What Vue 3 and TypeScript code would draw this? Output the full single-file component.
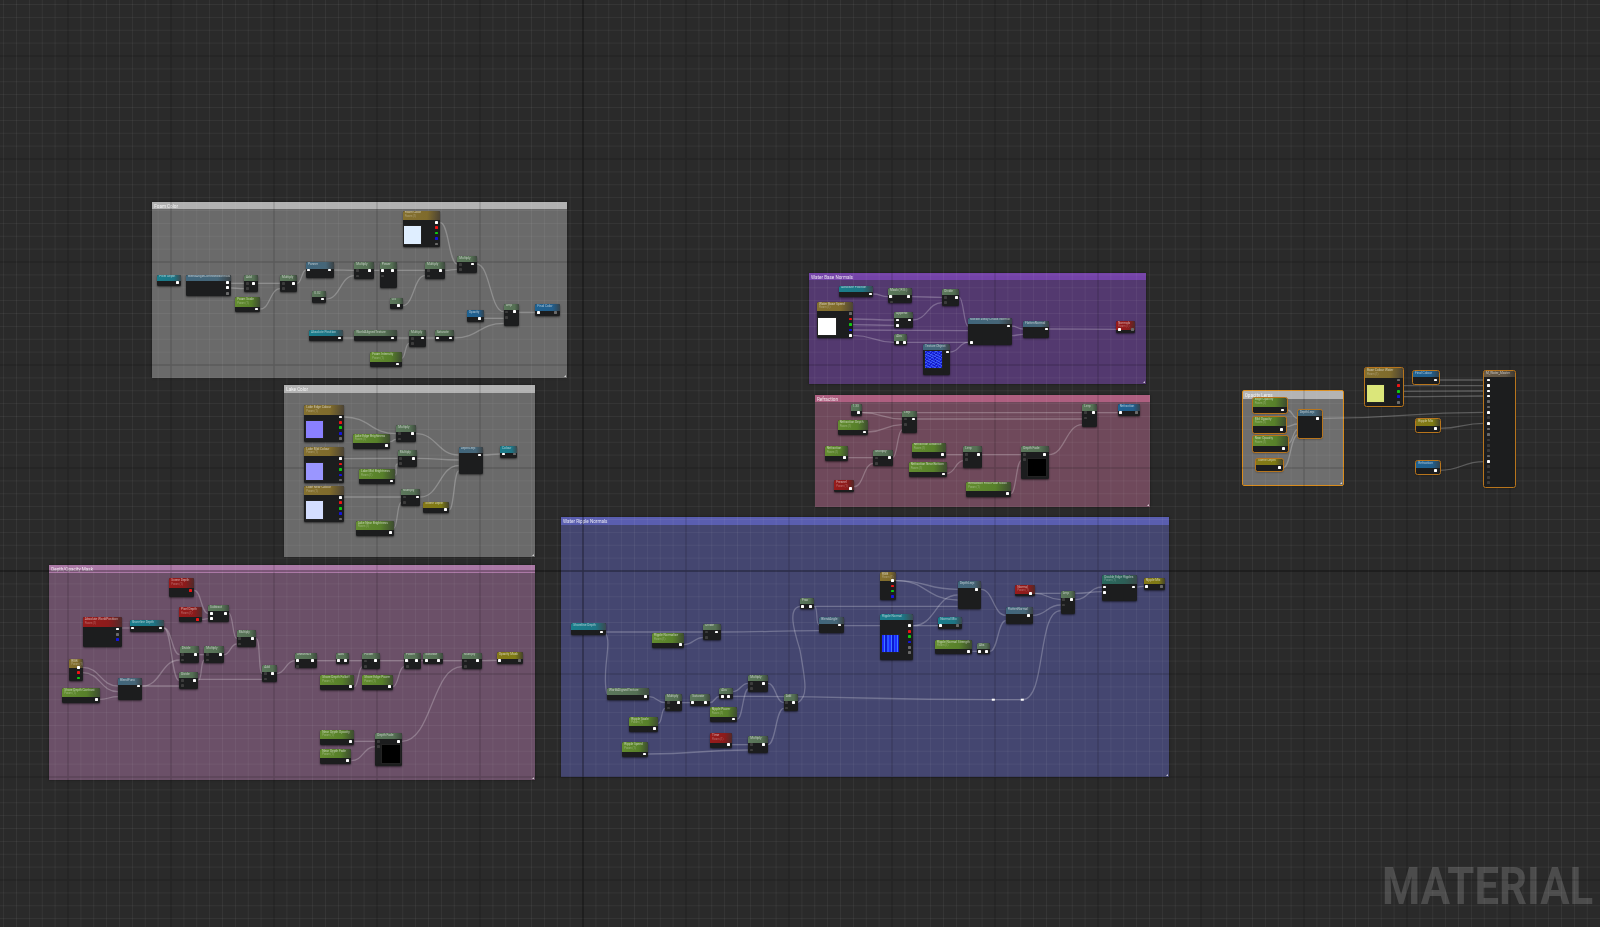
<script setup lang="ts">
import { computed } from 'vue'

type Pin = [number, number, string?]
type Thumb = [number, number, number, number, string]

interface GraphNode {
  x1: number
  y1: number
  x2: number
  y2: number
  kind: string
  title: string
  pins: Pin[]
  thumb?: Thumb
}

interface Group {
  ox: number
  oy: number
  selected?: boolean
  nodes: GraphNode[]
  wires: number[][]
}

const W = 1600
const H = 927
const ORIGIN_X = 583
const ORIGIN_Y = 571
const STEP = 12.875

const n = (x1: number, y1: number, x2: number, y2: number, kind: string, title: string, pins: Pin[] = [], thumb?: Thumb): GraphNode => ({ x1, y1, x2, y2, kind, title, pins, thumb })

// node and wire coordinates are in a 3x space per group, see ox / oy
const groups: Group[] = [
  {
    ox: 140, oy: 190,
    nodes: [
      n(52, 254, 123, 288, 'teal', 'Pixel Depth', [[113, 278]]),
      n(138, 254, 273, 319, 'slate', 'BlendAngleCorrectedNormals', [[262, 278], [262, 293], [262, 310, 'd']]),
      n(312, 255, 354, 306, 'math', 'Add', [[341, 280]]),
      n(286, 322, 361, 367, 'param', 'Foam Scale', [[350, 357]]),
      n(420, 255, 472, 306, 'math', 'Multiply', [[460, 280]]),
      n(498, 217, 581, 265, 'slate', 'Panner', [[506, 240], [568, 240]]),
      n(643, 217, 701, 267, 'math', 'Multiply', [[689, 241]]),
      n(517, 303, 559, 338, 'math', '0.02', [[547, 327]]),
      n(719, 217, 771, 295, 'math', 'Power', [[727, 241], [759, 241]]),
      n(749, 323, 788, 357, 'math', '0.5', [[776, 347]]),
      n(855, 217, 914, 267, 'math', 'Multiply', [[902, 241]]),
      n(952, 198, 1010, 248, 'math', 'Multiply', [[998, 222]]),
      n(788, 62, 901, 171, 'tex', 'Foam Color', [[890, 98], [890, 113, 'r'], [890, 129, 'g'], [890, 146, 'b'], [890, 162, 'd']], [789, 106, 847, 164, 'foam']),
      n(980, 361, 1032, 395, 'blue', 'Opacity', [[1020, 385]]),
      n(1091, 341, 1136, 408, 'math', 'Lerp', [[1125, 365]]),
      n(1186, 343, 1259, 379, 'blue', 'Final Color', [[1196, 367], [1248, 367, 'd']]),
      n(507, 420, 609, 454, 'teal', 'Absolute Position', [[597, 444]]),
      n(643, 420, 771, 454, 'math', 'WorldAlignedTexture', [[759, 444]]),
      n(807, 420, 858, 470, 'math', 'Multiply', [[846, 444]]),
      n(884, 420, 943, 454, 'math', 'Saturate', [[894, 444], [931, 444]]),
      n(691, 487, 785, 531, 'param', 'Foam Intensity', [[774, 522]]),
    ],
    wires: [
      [273, 280, 312, 280], [273, 294, 312, 296], [361, 357, 420, 296], [354, 280, 420, 280], [472, 280, 498, 240],
      [581, 240, 643, 241], [559, 327, 643, 257], [701, 241, 719, 241], [771, 241, 855, 241], [788, 347, 855, 257],
      [914, 241, 952, 238], [901, 98, 952, 222], [1010, 222, 1091, 365], [1032, 385, 1091, 385], [943, 444, 1091, 400],
      [609, 444, 643, 444], [771, 444, 807, 444], [858, 444, 884, 444], [785, 505, 807, 460], [1136, 367, 1186, 367],
    ],
  },
  {
    ox: 280, oy: 380,
    nodes: [
      n(73, 76, 192, 185, 'tex', 'Lake Edge Colour', [[182, 111], [182, 127, 'r'], [182, 143, 'g'], [182, 160, 'b'], [182, 176, 'd']], [75, 120, 133, 178, 'edge']),
      n(73, 201, 192, 310, 'tex', 'Lake Mid Colour', [[182, 236], [182, 252, 'r'], [182, 268, 'g'], [182, 285, 'b'], [182, 300, 'd']], [75, 246, 133, 304, 'mid']),
      n(73, 317, 192, 426, 'tex', 'Lake Near Colour', [[182, 352], [182, 368, 'r'], [182, 385, 'g'], [182, 401, 'b'], [182, 417, 'd']], [75, 361, 133, 419, 'near']),
      n(218, 162, 330, 207, 'param', 'Lake Edge Brightness', [[320, 197]]),
      n(237, 268, 344, 313, 'param', 'Lake Mid Brightness', [[334, 303]]),
      n(227, 423, 341, 468, 'param', 'Lake Near Brightness', [[331, 458]]),
      n(349, 136, 407, 187, 'math', 'Multiply', [[397, 161]]),
      n(353, 210, 412, 261, 'math', 'Multiply', [[402, 235]]),
      n(363, 326, 421, 377, 'math', 'Multiply', [[411, 351]]),
      n(430, 365, 508, 400, 'olive', 'Scene Depth', [[498, 389]]),
      n(536, 200, 609, 283, 'slate', 'DepthLerp', [[600, 225]]),
      n(660, 199, 711, 234, 'teal', 'Colour', [[670, 222], [702, 222, 'd']]),
    ],
    wires: [
      [192, 111, 349, 161], [330, 185, 349, 178], [192, 236, 353, 235], [344, 285, 353, 252], [192, 351, 363, 351],
      [341, 445, 363, 368], [407, 161, 536, 225], [412, 235, 536, 240], [421, 351, 536, 257], [508, 389, 536, 273], [609, 225, 660, 222],
    ],
  },
  {
    ox: 40, oy: 560,
    nodes: [
      n(388, 55, 463, 111, 'red', 'Scene Depth', [[451, 91, 'r']]),
      n(417, 142, 485, 186, 'red', 'Pixel Depth', [[473, 178, 'r']]),
      n(504, 135, 567, 186, 'math', 'Subtract', [[514, 160], [555, 160], [514, 176]]),
      n(128, 172, 245, 261, 'red', 'Absolute WorldPosition', [[234, 207], [234, 223, 'd'], [234, 239, 'b']]),
      n(269, 180, 372, 215, 'teal', 'Shoreline Depth', [[279, 204], [362, 204]]),
      n(419, 259, 478, 310, 'math', 'Divide', [[466, 284]]),
      n(493, 259, 552, 309, 'math', 'Multiply', [[541, 284]]),
      n(590, 211, 649, 261, 'math', 'Multiply', [[637, 236]]),
      n(417, 336, 475, 387, 'math', 'Divide', [[464, 361]]),
      n(88, 297, 128, 364, 'tex', 'RGB', [[116, 322], [116, 338, 'r'], [116, 354, 'g']]),
      n(67, 384, 179, 428, 'param', 'Shore Depth Contrast', [[169, 418]]),
      n(234, 355, 307, 420, 'slate', 'BlendFunc', [[295, 378]]),
      n(667, 316, 710, 367, 'math', 'Add', [[698, 341]]),
      n(764, 278, 830, 323, 'math', 'OneMinus', [[772, 302], [818, 302]]),
      n(889, 278, 928, 312, 'math', 'Abs', [[897, 302], [917, 302]]),
      n(967, 278, 1019, 328, 'math', 'Power', [[1007, 302]]),
      n(841, 346, 943, 390, 'param', 'Shore Depth Falloff', [[932, 380]]),
      n(967, 346, 1059, 390, 'param', 'Shore Edge Power', [[1048, 380]]),
      n(1092, 278, 1142, 328, 'math', 'Power', [[1100, 302], [1130, 302]]),
      n(1150, 278, 1208, 312, 'math', 'Saturate', [[1160, 302], [1197, 302]]),
      n(1266, 278, 1325, 328, 'math', 'Multiply', [[1313, 302]]),
      n(1370, 277, 1448, 312, 'olive', 'Opacity Mask', [[1380, 301], [1438, 301, 'd']]),
      n(841, 510, 943, 554, 'param', 'Near Depth Opacity', [[932, 544]]),
      n(841, 567, 934, 612, 'param', 'Near Depth Fade', [[922, 602]]),
      n(1006, 519, 1086, 618, 'math', 'Depth Fade', [[1075, 544]], [1023, 552, 1084, 612, 'black']),
    ],
    wires: [
      [463, 91, 504, 160], [485, 178, 504, 176], [567, 160, 590, 236], [245, 204, 269, 204], [372, 204, 419, 284],
      [372, 204, 417, 361], [478, 284, 493, 284], [552, 284, 590, 252], [475, 361, 493, 300], [128, 322, 234, 378],
      [128, 338, 234, 395], [179, 418, 234, 410], [307, 378, 419, 300], [307, 378, 417, 378], [475, 358, 667, 358],
      [649, 236, 667, 341], [710, 341, 764, 302], [830, 302, 889, 302], [928, 302, 967, 302], [943, 380, 967, 320],
      [1019, 302, 1092, 302], [1059, 380, 1092, 320], [1142, 302, 1150, 302], [1208, 302, 1266, 302], [1325, 302, 1370, 301],
      [1086, 544, 1266, 320], [943, 544, 1006, 544], [934, 602, 1006, 560],
    ],
  },
  {
    ox: 555, oy: 510,
    nodes: [
      n(49, 340, 152, 375, 'teal', 'Shoreline Depth', [[140, 366]]),
      n(291, 370, 387, 413, 'param', 'Ripple Normalize', [[377, 404]]),
      n(445, 341, 497, 391, 'math', 'Divide', [[485, 366]]),
      n(793, 322, 866, 370, 'slate', 'BlendAngle', [[854, 345]]),
      n(735, 264, 778, 298, 'math', 'Frac', [[743, 289], [767, 289]]),
      n(156, 535, 283, 569, 'math', 'WorldAlignedTexture', [[272, 560]]),
      n(330, 553, 381, 603, 'math', 'Multiply', [[369, 578]]),
      n(406, 553, 465, 587, 'math', 'Saturate', [[414, 578], [453, 578]]),
      n(493, 534, 533, 568, 'math', 'Abs', [[502, 559], [521, 559]]),
      n(580, 495, 639, 545, 'math', 'Multiply', [[627, 520]]),
      n(686, 553, 728, 603, 'math', 'Add', [[716, 578]]),
      n(223, 621, 310, 665, 'param', 'Ripple Scale', [[299, 656]]),
      n(464, 592, 547, 636, 'param', 'Ripple Power', [[536, 627]]),
      n(465, 670, 530, 713, 'red', 'Time', [[519, 704]]),
      n(202, 697, 279, 741, 'param', 'Ripple Speed', [[269, 732]]),
      n(580, 679, 639, 729, 'math', 'Multiply', [[627, 704]]),
    ],
    wires: [
      [152, 366, 445, 366], [497, 366, 793, 362], [387, 404, 445, 382], [152, 370, 172, 400, 138, 490, 156, 552],
      [283, 560, 330, 578], [310, 640, 330, 595], [381, 578, 406, 578], [465, 578, 493, 559], [533, 545, 580, 520],
      [547, 627, 580, 537], [639, 520, 686, 578], [530, 704, 580, 704], [279, 732, 580, 720], [639, 704, 686, 595],
      [728, 578, 762, 560, 750, 510, 735, 420], [735, 420, 720, 370, 695, 295, 735, 289], [778, 289, 793, 345],
    ],
  },
  {
    ox: 860, oy: 510,
    nodes: [
      n(60, 186, 108, 269, 'tex', 'RGB', [[96, 212], [96, 228, 'r'], [96, 243, 'g'], [96, 260, 'b']]),
      n(60, 312, 160, 449, 'teal', 'Ripple Normal', [[149, 347], [149, 364, 'r'], [149, 380, 'g'], [149, 396, 'b'], [149, 412, 'd'], [149, 428, 'd']], [63, 372, 120, 430, 'stripes']),
      n(293, 214, 363, 296, 'slate', 'DepthLerp', [[351, 238]]),
      n(235, 322, 305, 356, 'teal', 'Normal Mix', [[243, 347], [294, 347, 'd']]),
      n(225, 390, 337, 433, 'param', 'Ripple Normal Strength', [[325, 424]]),
      n(351, 399, 390, 433, 'math', 'Abs', [[359, 424], [379, 424]]),
      n(437, 292, 518, 341, 'slate', 'FlattenNormal', [[506, 316]]),
      n(466, 225, 525, 259, 'red', 'Normal', [[513, 250]]),
      n(602, 244, 646, 312, 'math', 'Lerp', [[634, 269]]),
      n(727, 195, 832, 273, 'green', 'Double Edge Ripples', [[735, 231], [735, 247], [820, 231]]),
      n(851, 204, 916, 239, 'olive', 'Ripple Mix', [[860, 229], [906, 229, 'd']]),
    ],
    wires: [
      [-382, 559, 400, 569], [400, 569, 487, 569], [487, 569, 560, 569, 530, 302, 602, 302],
      [-137, 289, 293, 289], [-49, 347, 60, 347], [108, 212, 293, 238], [108, 212, 293, 270],
      [160, 347, 235, 347], [160, 347, 293, 255], [363, 238, 437, 316], [337, 424, 351, 424], [390, 424, 437, 332],
      [525, 250, 602, 269], [525, 250, 602, 250], [518, 316, 602, 285], [646, 269, 727, 231], [646, 250, 727, 245], [832, 231, 851, 229],
    ],
  },
  {
    ox: 800, oy: 265,
    nodes: [
      n(118, 62, 220, 96, 'teal', 'Absolute Position', [[211, 87]]),
      n(264, 70, 335, 115, 'math', 'Mask ( R G )', [[272, 95], [326, 95]]),
      n(427, 72, 478, 122, 'math', 'Divide', [[469, 97]]),
      n(51, 111, 159, 219, 'tex', 'Water Base Speed', [[150, 145, 'd'], [150, 162, 'r'], [150, 179, 'g'], [150, 195, 'b'], [150, 211]], [52, 156, 110, 214, 'white']),
      n(283, 140, 338, 190, 'math', 'Append', [[292, 165], [329, 165], [292, 181]]),
      n(283, 208, 320, 240, 'math', 'Abs', [[292, 232], [313, 232]]),
      n(369, 237, 451, 329, 'slate', 'Texture Object', [[442, 261]], [371, 255, 430, 313, 'noise']),
      n(504, 158, 635, 241, 'slate', 'Motion 4Way Chaos Normal', [[625, 183], [514, 232]]),
      n(669, 168, 747, 218, 'slate', 'FlattenNormal', [[738, 192]]),
      n(948, 168, 1006, 203, 'red', 'Normals', [[958, 193], [998, 193, 'd']]),
    ],
    wires: [
      [220, 87, 264, 95], [335, 95, 427, 97], [159, 162, 283, 165], [159, 179, 283, 181], [159, 195, 504, 197],
      [159, 211, 283, 232], [320, 232, 504, 232], [338, 165, 427, 113], [478, 97, 504, 183], [451, 261, 504, 232],
      [635, 183, 669, 192], [635, 212, 669, 208], [747, 192, 948, 193],
    ],
  },
  {
    ox: 805, oy: 390,
    nodes: [
      n(137, 43, 172, 78, 'math', '1.33', [[162, 68]]),
      n(98, 91, 188, 136, 'param', 'Refraction Depth', [[178, 126]]),
      n(59, 169, 130, 213, 'param', 'Refraction', [[120, 203]]),
      n(88, 271, 147, 305, 'red', 'Fresnel', [[137, 296]]),
      n(205, 179, 263, 228, 'math', 'Multiply', [[254, 202]]),
      n(291, 62, 335, 129, 'math', 'Lerp', [[326, 87]]),
      n(320, 158, 424, 203, 'param', 'Refraction Distance', [[414, 194]]),
      n(311, 217, 427, 262, 'param', 'Refraction Near Bottom', [[417, 252]]),
      n(475, 168, 531, 235, 'math', 'Lerp', [[521, 193]]),
      n(484, 275, 618, 320, 'param', 'Refraction Final Fade Mask', [[608, 310]]),
      n(649, 168, 731, 266, 'math', 'Depth Fade', [[720, 193]], [667, 204, 725, 262, 'black']),
      n(832, 43, 877, 110, 'math', 'Lerp', [[867, 68]]),
      n(938, 43, 1004, 78, 'blue', 'Refraction', [[948, 68], [995, 68, 'd']]),
    ],
    wires: [
      [172, 68, 291, 87], [172, 68, 832, 68], [188, 126, 291, 104], [130, 203, 205, 203], [147, 290, 205, 220],
      [263, 203, 291, 120], [335, 87, 832, 87], [424, 194, 475, 194], [427, 250, 475, 212], [531, 194, 649, 194],
      [618, 310, 649, 212], [731, 194, 832, 104], [877, 68, 938, 68],
    ],
  },
  {
    ox: 1230, oy: 360, selected: true,
    nodes: [
      n(68, 113, 172, 160, 'param', 'Edge Opacity', [[158, 150]]),
      n(68, 171, 167, 218, 'param', 'Mid Opacity', [[154, 208]]),
      n(68, 229, 175, 276, 'param', 'Near Opacity', [[161, 266]]),
      n(78, 296, 160, 334, 'olive', 'Scene Depth', [[147, 323]]),
      n(203, 150, 277, 235, 'slate', 'DepthLerp', [[264, 175]]),
      n(405, 25, 518, 138, 'tex', 'Base Colour Water', [[505, 60, 'd'], [505, 77, 'r'], [505, 94, 'g'], [505, 110, 'b'], [505, 127, 'd']], [408, 71, 466, 130, 'lime']),
      n(549, 33, 627, 72, 'blue', 'Final Colour', [[615, 60]]),
      n(559, 178, 629, 217, 'olive', 'Ripple Mix', [[617, 205]]),
      n(559, 304, 629, 343, 'blue', 'Refraction', [[617, 331]]),
      n(762, 33, 854, 382, 'result', 'M_Water_Master', [
        [775, 60], [775, 76], [775, 93], [775, 108], [775, 125, 'd'], [775, 141, 'd'], [775, 157], [775, 173, 'f'],
        [775, 190], [775, 207, 'd'], [775, 223, 'd'], [775, 240, 'f'], [775, 256, 'f'], [775, 272, 'f'], [775, 288, 'd'],
        [775, 305], [775, 320, 'f'], [775, 336, 'f'], [775, 352, 'f'], [775, 368, 'f'],
      ]),
    ],
    wires: [
      [627, 60, 762, 60], [518, 77, 762, 77], [518, 94, 762, 93], [518, 110, 762, 108], [277, 175, 762, 157],
      [629, 205, 762, 190], [629, 331, 762, 305], [172, 150, 203, 175], [167, 200, 203, 192], [175, 250, 203, 208], [160, 323, 203, 225],
    ],
  },
]

const comments = [
  { title: 'Foam Color', x: 152.3, y: 201.7, w: 414.4, h: 176, kind: 'grey' },
  { title: 'Lake Color', x: 284.3, y: 385, w: 250.7, h: 171.7, kind: 'grey' },
  { title: 'Depth/Opacity Mask', x: 49.3, y: 565.3, w: 485.4, h: 214.7, kind: 'pink' },
  { title: 'Water Ripple Normals', x: 561, y: 517.3, w: 607.7, h: 259.4, kind: 'indigo' },
  { title: 'Water Base Normals', x: 809, y: 272.7, w: 336.7, h: 111.6, kind: 'purple' },
  { title: 'Refraction', x: 815, y: 394.7, w: 335, h: 112.6, kind: 'rose' },
  { title: 'Opacity Lerps', x: 1242.7, y: 391, w: 100, h: 94, kind: 'picked' },
]

function buildLines(step: number, skipEvery: number) {
  let d = ''
  for (let k = -60; k <= 90; k++) {
    if (skipEvery && k % skipEvery === 0) continue
    const x = ORIGIN_X + k * step
    if (x >= 0 && x <= W) d += `M${x} 0V${H}`
  }
  for (let k = -60; k <= 40; k++) {
    if (skipEvery && k % skipEvery === 0) continue
    const y = ORIGIN_Y + k * step
    if (y >= 0 && y <= H) d += `M0 ${y}H${W}`
  }
  return d
}

const minorGrid = buildLines(STEP, 8)
const majorGrid = buildLines(STEP * 8, 0)
const originLines = `M${ORIGIN_X} 0V${H}M0 ${ORIGIN_Y}H${W}`

const wirePaths = computed(() => {
  const list: { d: string; key: string }[] = []
  groups.forEach((g, gi) => {
    const px = (v: number) => g.ox + v / 3
    const py = (v: number) => g.oy + v / 3
    g.wires.forEach((w, wi) => {
      let d: string
      if (w.length === 8) {
        d = `M${px(w[0])} ${py(w[1])}C${px(w[2])} ${py(w[3])} ${px(w[4])} ${py(w[5])} ${px(w[6])} ${py(w[7])}`
      } else {
        const [a, b, c, e] = w
        const dx = Math.max(Math.abs(c - a) * 0.5, 12)
        d = `M${px(a)} ${py(b)}C${px(a + dx)} ${py(b)} ${px(c - dx)} ${py(e)} ${px(c)} ${py(e)}`
      }
      list.push({ d, key: `${gi}-${wi}` })
    })
  })
  return list
})

const drawnNodes = computed(() =>
  groups.flatMap((g, gi) =>
    g.nodes.map((node, ni) => {
      const tall = ['param', 'tex', 'red', 'green'].includes(node.kind)
      const pins = [...node.pins]
      if (node.kind === 'math' && node.y2 - node.y1 > 40) {
        pins.unshift([node.x1 + 10, node.y1 + 41, 'f'], [node.x1 + 10, node.y1 + 25, 'f'])
      }
      return {
        key: `${gi}-${ni}`,
        title: node.title,
        sub: tall ? 'Param (1)' : '',
        kind: node.kind,
        selected: !!g.selected,
        box: {
          left: `${g.ox + node.x1 / 3}px`,
          top: `${g.oy + node.y1 / 3}px`,
          width: `${(node.x2 - node.x1) / 3}px`,
          height: `${(node.y2 - node.y1) / 3}px`,
        },
        pins: pins.map((p, i) => ({
          key: i,
          cls: p[2] ?? 'w',
          style: { left: `${(p[0] - node.x1) / 3 - 1.5}px`, top: `${(p[1] - node.y1) / 3 - 1.2}px` },
        })),
        thumb: node.thumb && {
          cls: node.thumb[4],
          style: {
            left: `${(node.thumb[0] - node.x1) / 3}px`,
            top: `${(node.thumb[1] - node.y1) / 3}px`,
            width: `${(node.thumb[2] - node.thumb[0]) / 3}px`,
            height: `${(node.thumb[3] - node.thumb[1]) / 3}px`,
          },
        },
      }
    }),
  ),
)

const reroutes = [
  { x: 993.3, y: 699.7 },
  { x: 1022.3, y: 699.7 },
]

function commentBox(c: { x: number; y: number; w: number; h: number }) {
  return { left: `${c.x}px`, top: `${c.y}px`, width: `${c.w}px`, height: `${c.h}px` }
}
</script>

<template>
  <div class="graph">
    <div class="watermark">MATERIAL</div>

    <section
      v-for="c in comments"
      :key="c.title"
      :class="['comment', `c-${c.kind}`]"
      :style="commentBox(c)"
    >
      <header class="comment-title">{{ c.title }}</header>
    </section>

    <svg class="layer" :viewBox="`0 0 ${W} ${H}`">
      <path :d="minorGrid" class="grid-minor" />
      <path :d="majorGrid" class="grid-major" />
      <path :d="originLines" class="grid-origin" />
      <path v-for="w in wirePaths" :key="w.key" :d="w.d" class="wire" />
      <rect v-for="r in reroutes" :key="r.x" :x="r.x - 1.5" :y="r.y - 1" width="3" height="2" class="reroute" />
    </svg>

    <div
      v-for="node in drawnNodes"
      :key="node.key"
      :class="['node', `k-${node.kind}`, { picked: node.selected }]"
      :style="node.box"
    >
      <div class="node-head">
        <span class="node-title">{{ node.title }}</span>
        <span v-if="node.sub" class="node-sub">{{ node.sub }}</span>
      </div>
      <div v-if="node.thumb" :class="['thumb', `t-${node.thumb.cls}`]" :style="node.thumb.style"></div>
      <i v-for="p in node.pins" :key="p.key" :class="['pin', `p-${p.cls}`]" :style="p.style"></i>
    </div>
  </div>
</template>

<style scoped>
.graph {
  position: relative;
  width: 1600px;
  height: 927px;
  overflow: hidden;
  background: #2a2a2a;
  font-family: Roboto, "Liberation Sans", sans-serif;
  filter: blur(0.65px);
}

.layer {
  position: absolute;
  left: 0;
  top: 0;
  width: 1600px;
  height: 927px;
  pointer-events: none;
}

.grid-minor { fill: none; stroke: rgba(255, 255, 255, 0.055); stroke-width: 1; }
.grid-major { fill: none; stroke: rgba(0, 0, 0, 0.15); stroke-width: 1.4; }
.grid-origin { fill: none; stroke: rgba(0, 0, 0, 0.25); stroke-width: 1.4; }
.wire { fill: none; stroke: rgba(255, 255, 255, 0.24); stroke-width: 1.3; }
.reroute { fill: #fff; }

.watermark {
  position: absolute;
  left: 1382px;
  top: 857px;
  font-size: 52px;
  font-weight: 700;
  line-height: 60px;
  color: #4c4c4c;
  transform-origin: left center;
  transform: scaleX(0.84);
  white-space: nowrap;
}

/* comment boxes */
.comment {
  position: absolute;
  box-shadow: 0 0 2px rgba(0, 0, 0, 0.5);
}
.comment::after {
  content: "";
  position: absolute;
  right: 1px;
  bottom: 1px;
  border-left: 2.5px solid transparent;
  border-bottom: 2.5px solid rgba(255, 255, 255, 0.7);
}
.comment-title {
  height: 7.5px;
  padding-left: 2px;
  font-size: 4.6px;
  line-height: 9.5px;
  color: rgba(255, 255, 255, 0.85);
  white-space: nowrap;
  overflow: hidden;
}
.c-grey { background: #6a6a6a; }
.c-grey .comment-title { background: #b2b2b2; }
.c-pink { background: #6b5068; }
.c-pink .comment-title { background: #ab79a6; }
.c-indigo { background: #444670; }
.c-indigo .comment-title { background: #5a5eb0; }
.c-purple { background: #53396f; }
.c-purple .comment-title { background: #7443a8; }
.c-rose { background: #6f495b; }
.c-rose .comment-title { background: #ae5f80; }
.c-picked {
  background: #6e6e6e;
  outline: 1px solid #d98c1c;
  border-radius: 1px;
}
.c-picked .comment-title { background: #b4b4b4; }

/* material nodes */
.node {
  position: absolute;
  background: #1c1d1e;
  border-radius: 1.5px;
  box-shadow: 0 1px 2px rgba(0, 0, 0, 0.55);
}
.node.picked { outline: 1px solid #b8751c; }
.node-head {
  display: flex;
  flex-direction: column;
  height: 5.8px;
  padding: 0.6px 2px 0;
  border-radius: 1.5px 1.5px 0 0;
  font-size: 3.2px;
  line-height: 3.6px;
  color: rgba(255, 255, 255, 0.6);
  overflow: hidden;
  white-space: nowrap;
}
.node-sub { font-size: 2.6px; line-height: 3px; opacity: 0.55; }

.k-teal .node-head { background: linear-gradient(90deg, #1a7e8c, #1e7484 70%, #3a4a50); }
.k-slate .node-head { background: linear-gradient(90deg, #40667c, #466678 70%, #3a4246); }
.k-math .node-head { background: linear-gradient(90deg, #5c785c, #557054 70%, #3d4a3e); }
.k-blue .node-head { background: linear-gradient(90deg, #1e6292, #225e8c 70%, #33434e); }
.k-olive .node-head { background: linear-gradient(90deg, #857818, #7e7b14 70%, #45432a); }
.k-param .node-head { height: 8.8px; background: linear-gradient(95deg, #648d30, #57802a 65%, #3c4a30); }
.k-tex .node-head { height: 8.8px; background: linear-gradient(95deg, #84702f, #7f6b2c 65%, #4a4234); }
.k-red .node-head { height: 8.8px; background: linear-gradient(95deg, #981b1b, #8c1b1b 65%, #4e2a2a); }
.k-green .node-head { height: 8.8px; background: linear-gradient(95deg, #2a6a5e, #2d5f57 65%, #3a4a48); }
.k-result .node-head { background: linear-gradient(90deg, #6a5c48, #5d5344 70%, #3e3a34); }

.thumb { position: absolute; border: 0.5px solid #222; box-sizing: border-box; }
.t-foam { background: #dfeeff; }
.t-edge { background: #8a80ff; }
.t-mid { background: #9a96ff; }
.t-near { background: #d4deff; }
.t-white { background: #fff; }
.t-black { background: #000; }
.t-lime { background: #dbe67a; }
.t-stripes {
  background: repeating-linear-gradient(90deg, #1d2cff 0 2px, #3d7bff 2px 3.2px, #0c18d0 3.2px 5px, #2a58ff 5px 6.6px);
}
.t-noise {
  background:
    repeating-linear-gradient(28deg, rgba(90, 140, 255, 0.55) 0 0.8px, transparent 0.8px 2.4px),
    repeating-linear-gradient(-35deg, rgba(10, 10, 160, 0.6) 0 1px, transparent 1px 3px),
    #1f2de8;
}

.pin {
  position: absolute;
  width: 3px;
  height: 2.4px;
  border-radius: 0.4px;
}
.p-w { background: #fff; }
.p-r { background: #f01414; }
.p-g { background: #12c812; }
.p-b { background: #1414e0; }
.p-d { background: #6a6a6a; }
.p-f { background: #3c3c3c; }
</style>

<style>
html,
body {
  margin: 0;
  background: #2a2a2a;
}
</style>
